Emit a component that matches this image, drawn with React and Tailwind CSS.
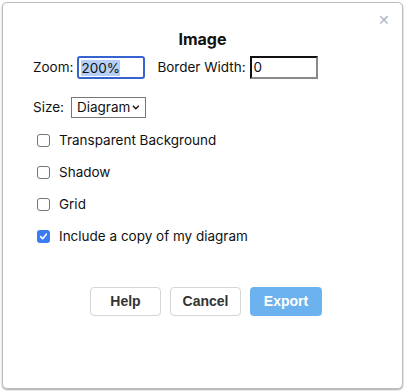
import React from "react";

function Check({ checked }) {
  if (checked) {
    return (
      <span className="flex h-[13px] w-[13px] items-center justify-center rounded-[3px] bg-[#3b7cf2]">
        <svg width="9" height="9" viewBox="0 0 10 10">
          <path d="M1.8 5.2 L4.1 7.4 L8.2 2.4" stroke="white" strokeWidth="1.8" fill="none" strokeLinecap="round" strokeLinejoin="round" />
        </svg>
      </span>
    );
  }
  return <span className="block h-[13px] w-[13px] rounded-[3px] border border-[#767676] bg-white" />;
}

export default function App() {
  return (
    <div className="h-[391px] w-[405px] bg-white p-[2px] pb-[2px]" style={{ fontFamily: "Inter, 'Noto Sans', sans-serif" }}>
      <div className="relative flex h-[387px] w-[401px] flex-col rounded-[5px] border border-[#bdbdbd] bg-white text-[13.5px] text-[#111] shadow-[0_1px_2px_rgba(0,0,0,0.35)]">
        <span className="absolute right-[12px] top-[10px] text-[14px] leading-none text-[#a9b4c8]">✕</span>
        <div className="mt-[26px] text-center text-[16px] font-bold leading-[20px]">Image</div>
        <div className="ml-[30px] mt-[7px] flex items-center">
          <span>Zoom:</span>
          <span className="ml-[4px] flex h-[23px] w-[68px] items-center rounded-[3px] border-2 border-[#3563d0] px-[2px]">
            <span className="bg-[#b5cff6] leading-[16px]">200%</span>
          </span>
          <span className="ml-[12px]">Border Width:</span>
          <span className="ml-[4px] flex h-[23px] w-[68px] items-center border-2 border-b-[#8a8a8a] border-l-[#111] border-r-[#8a8a8a] border-t-[#111] px-[2px]">0</span>
        </div>
        <div className="ml-[30px] mt-[18px] flex items-center">
          <span>Size:</span>
          <span className="ml-[7px] flex h-[21px] w-[75px] items-center border border-[#767676] px-[5px]">
            Diagram
            <svg className="ml-[2px]" width="9" height="7" viewBox="0 0 9 7">
              <path d="M1 1.5 L4.5 5 L8 1.5" stroke="#111" strokeWidth="1.6" fill="none" />
            </svg>
          </span>
        </div>
        <div className="ml-[34px] mt-[14px] flex flex-col gap-[16px]">
          {[
            ["Transparent Background", false],
            ["Shadow", false],
            ["Grid", false],
            ["Include a copy of my diagram", true],
          ].map(([label, c]) => (
            <div key={label} className="flex h-[16px] items-center">
              <Check checked={c} />
              <span className="ml-[9px]">{label}</span>
            </div>
          ))}
        </div>
        <div className="mt-[43px] flex justify-center gap-[9px] pl-[7px]" style={{ fontFamily: "'Liberation Sans', Arial, sans-serif" }}>
          <button className="h-[29px] w-[71px] rounded-[4px] border border-[#d6d6d6] bg-white text-[14px] font-bold text-[#333]">Help</button>
          <button className="h-[29px] w-[71px] rounded-[4px] border border-[#d6d6d6] bg-white text-[14px] font-bold text-[#333]">Cancel</button>
          <button className="h-[29px] w-[72px] rounded-[4px] bg-[#6cb2ef] text-[14px] font-bold text-white">Export</button>
        </div>
      </div>
    </div>
  );
}
